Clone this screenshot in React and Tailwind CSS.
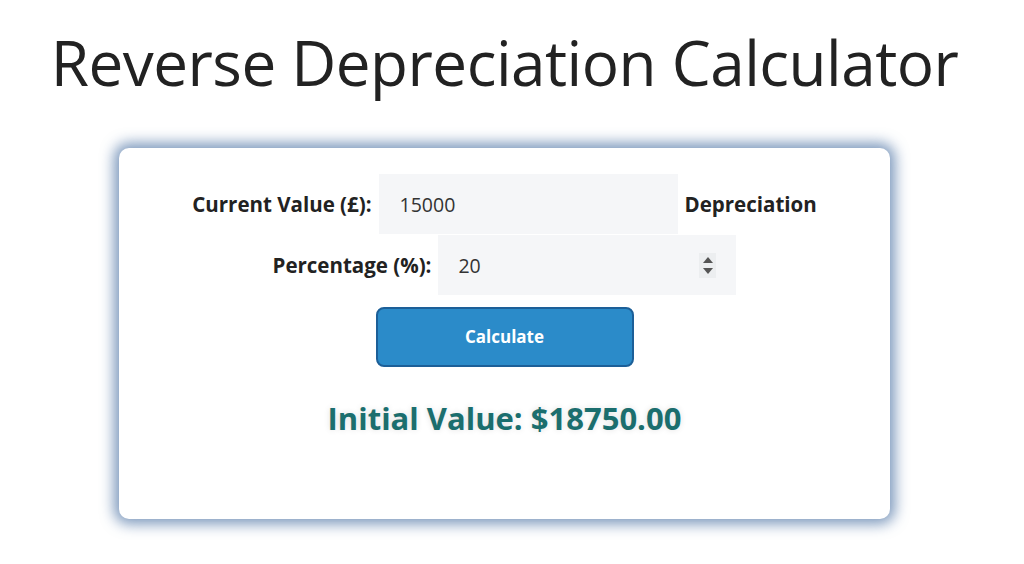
import { useState } from "react";

export default function App() {
  const [current, setCurrent] = useState("15000");
  const [percent, setPercent] = useState("20");
  const [result, setResult] = useState("18750.00");

  // reverse depreciation: initial = current / (1 - pct)
  const calculate = () => {
    const c = parseFloat(current);
    const p = parseFloat(percent);
    if (isNaN(c) || isNaN(p) || p >= 100) return;
    setResult((c / (1 - p / 100)).toFixed(2));
  };

  return (
    <div className="w-[1024px] h-[564px] bg-white flex flex-col items-center pr-[15px] font-['Open_Sans',sans-serif]">
      <h1 className="mt-[22px] text-[62px] leading-[80px] text-[#222] tracking-[-0.5px] font-normal whitespace-nowrap">
        Reverse Depreciation Calculator
      </h1>

      <div className="mt-[46px] w-[771px] h-[371px] bg-white rounded-[10px] shadow-[0_0_14px_5px_rgba(80,118,165,0.75)] flex flex-col items-center pt-[26px]">
        <div className="flex items-center justify-center">
          <label className="text-[20.5px] font-bold text-[#222] mr-[7px]">
            Current Value (£):
          </label>
          <input
            type="text"
            value={current}
            onChange={(e) => setCurrent(e.target.value)}
            className="w-[299px] h-[60px] bg-[#f5f6f8] px-[21px] text-[19.5px] text-[#333] outline-none"
          />
          <label className="text-[20.5px] font-bold text-[#222] ml-[7px]">
            Depreciation
          </label>
        </div>
        <div className="flex items-center justify-center mt-[1px]">
          <label className="text-[20.5px] font-bold text-[#222] mr-[7px]">
            Percentage (%):
          </label>
          <div className="relative">
            <input
              type="text"
              value={percent}
              onChange={(e) => setPercent(e.target.value)}
              className="w-[298px] h-[60px] bg-[#f5f6f8] px-[20px] text-[19.5px] text-[#333] outline-none"
            />
            <span className="absolute right-[20px] top-[18px] w-[17px] h-[25px] bg-[#eceef0] flex flex-col items-center justify-center gap-[5px]">
              <svg width="10" height="6" viewBox="0 0 10 6">
                <path d="M5 0 L10 6 L0 6 Z" fill="#555" />
              </svg>
              <svg width="10" height="6" viewBox="0 0 10 6">
                <path d="M0 0 L10 0 L5 6 Z" fill="#555" />
              </svg>
            </span>
          </div>
        </div>

        <button
          onClick={calculate}
          className="mt-[12px] w-[258px] h-[60px] bg-[#2b8bc9] border-2 border-[#1c5f98] rounded-[8px] text-white text-[17px] font-bold"
        >
          Calculate
        </button>

        <div className="mt-[28px] text-[31px] font-bold text-[#1b6e6e] [text-shadow:0_0_6px_rgba(0,0,0,0.12)]">
          Initial Value: ${result}
        </div>
      </div>
    </div>
  );
}
